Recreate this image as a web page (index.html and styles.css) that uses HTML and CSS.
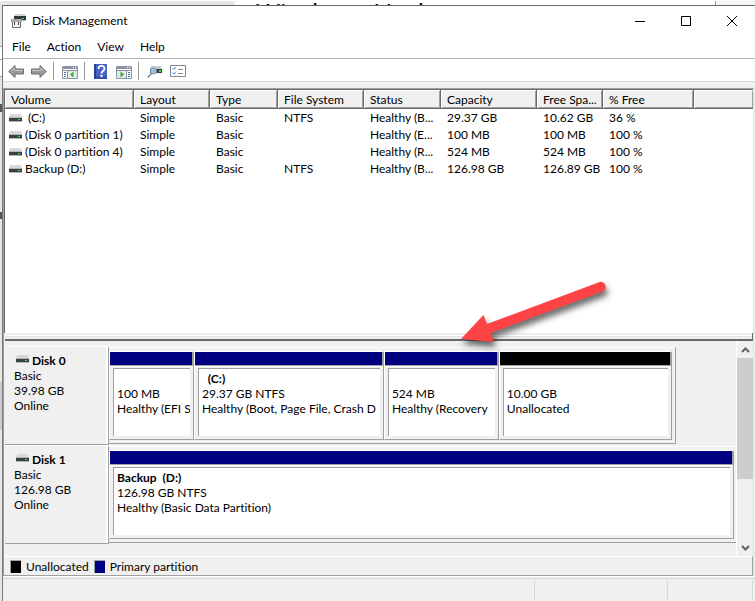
FILE: index.html
```html
<!DOCTYPE html>
<html lang="en">
<head>
<meta charset="utf-8">
<title>Disk Management</title>
<link rel="stylesheet" href="styles.css">
</head>
<body>
<svg class="defs" aria-hidden="true">
  <symbol id="drive" viewBox="0 0 13 8">
    <path d="M1 0h11l1 4H0z" fill="#d6d9dc"/>
    <rect y="3" width="13" height="5" fill="#b4b7ba"/>
    <rect y="4" width="13" height="3" fill="#3c4044"/>
    <rect x="9" y="5" width="2" height="1" fill="#2bf03c"/>
  </symbol>
</svg>
<div class="backdrop" aria-hidden="true"><span class="backdrop-title">Windows Update</span></div>
<main class="window">
  <header class="titlebar">
    <svg class="app-icon" viewBox="0 0 16 16" aria-hidden="true">
      <path d="M4 1h10l1 2H3z" fill="#d3d6da"/><rect x="3" y="3" width="12" height="4" fill="#34383c"/>
      <rect x="11" y="5" width="2" height="1" fill="#2bf03c"/><rect x="3" y="7" width="12" height="1" fill="#b4b7ba"/>
      <path d="M0 6h11v3H0z" fill="#a8a8a8"/><path d="M1 9h9v6H1z" fill="#707070"/><path d="M2 9h7v5H2z" fill="#f4f4f4"/>
      <path d="M3 9h1v3H3zM7 9h1v3H7z" fill="#444"/>
    </svg>
    <h1>Disk Management</h1>
    <div class="controls">
      <button aria-label="Minimize"><svg viewBox="0 0 10 10"><path d="M0 5.500h10"/></svg></button>
      <button aria-label="Maximize"><svg viewBox="0 0 10 10"><path d="M.5.5h9v9h-9z"/></svg></button>
      <button aria-label="Close"><svg viewBox="0 0 10 10"><path d="M0 0l10 10M10 0L0 10"/></svg></button>
    </div>
  </header>
  <nav class="menubar">
    <button>File</button><button>Action</button><button>View</button><button>Help</button>
  </nav>
  <div class="toolbar">
    <div class="group">
      <button aria-label="Back"><svg viewBox="0 0 16 16"><path d="M.7 7.500L7 1.500v3.500h8.500v5H7v3.500z" fill="#9a9a9a" stroke="#6c6c6c"/><path d="M3 7l3-3v2.500h9" fill="none" stroke="#c4c4c4"/></svg></button>
      <button aria-label="Forward"><svg viewBox="0 0 16 16"><path d="M15.300 7.500L9 1.500v3.500H.5v5H9v3.500z" fill="#9a9a9a" stroke="#6c6c6c"/><path d="M1 6.500h9V4l3 3" fill="none" stroke="#c4c4c4"/></svg></button>
    </div>
    <div class="group">
      <button aria-label="Show console tree"><svg viewBox="0 0 16 16"><path d="M.5 2.500h15v12H.5z" fill="#fff" stroke="#8a94a3"/><path d="M1 3h14v2H1z" fill="#8a94a3"/><path d="M11 3h1v1h-1zM13 3h1v1h-1z" fill="#fff"/><path d="M1 6.500h14M5.500 7v7" stroke="#8a94a3"/><path d="M2 8.500h2M2 10.500h2M2 12.500h2" stroke="#3f74b5"/><path d="M6 7h9v7H6z" fill="#e4e8ee"/><path d="M11.500 7.500v6L8 10.500z" fill="#35b11e"/></svg></button>
    </div>
    <div class="group">
      <button aria-label="Help"><svg viewBox="0 0 16 16"><path d="M1 0h13v15H1z" fill="#4565c8"/><path d="M1 0h2v15H1z" fill="#273f94"/><path d="M3 12h11v3H3z" fill="#3551ad"/><path d="M5.500 5c0-4 6-4 6-.5 0 2.500-3 2.500-3 5" fill="none" stroke="#fff" stroke-width="1.800"/><circle cx="8.500" cy="12" r="1.200" fill="#fff"/></svg></button>
      <button aria-label="Show action pane"><svg viewBox="0 0 16 16"><path d="M.5 2.500h15v12H.5z" fill="#fff" stroke="#8a94a3"/><path d="M1 3h14v2H1z" fill="#8a94a3"/><path d="M11 3h1v1h-1zM13 3h1v1h-1z" fill="#fff"/><path d="M1 6.500h14M10.500 7v7" stroke="#8a94a3"/><path d="M12 8.500h2M12 10.500h2M12 12.500h2" stroke="#3f74b5"/><path d="M1 7h9v7H1z" fill="#e4e8ee"/><path d="M4.500 7.500v6L8 10.500z" fill="#35b11e"/></svg></button>
    </div>
    <div class="group">
      <button aria-label="Rescan disks"><svg viewBox="0 0 16 16"><path d="M4 2h10l1 3H3z" fill="#c9ccd0"/><path d="M3 5h12v4H3z" fill="#34383c"/><path d="M12 6h2v2h-2z" fill="#2bf03c"/><circle cx="6.500" cy="7" r="3" fill="#9fc3dc" stroke="#7294ac"/><path d="M4.500 9.500L.8 13.500" stroke="#7d8790" stroke-width="1.600"/></svg></button>
      <button aria-label="Properties"><svg viewBox="0 0 16 16"><path d="M.5 1.500h15v11H.5z" fill="#fff" stroke="#858585"/><path d="M2.500 4l1.500 1.500L6 3M2.500 8.500L4 10l2-2.500" fill="none" stroke="#3a86d4"/><path d="M8 5.500h5M8 9.500h5" stroke="#8c8c8c"/></svg></button>
    </div>
  </div>
  <div class="client">
    <section class="volumes">
      <table>
        <colgroup><col class="c-volume"><col class="c-layout"><col class="c-type"><col class="c-fs"><col class="c-status"><col class="c-capacity"><col class="c-free"><col class="c-percent"><col></colgroup>
        <thead><tr><th>Volume</th><th>Layout</th><th>Type</th><th>File System</th><th>Status</th><th>Capacity</th><th>Free Spa...</th><th>% Free</th><th></th></tr></thead>
        <tbody>
          <tr><td><svg class="drive"><use href="#drive"/></svg>&nbsp;(C:)</td><td>Simple</td><td>Basic</td><td>NTFS</td><td>Healthy (B...</td><td>29.37 GB</td><td>10.62 GB</td><td>36 %</td><td></td></tr>
          <tr><td><svg class="drive"><use href="#drive"/></svg>(Disk 0 partition 1)</td><td>Simple</td><td>Basic</td><td></td><td>Healthy (E...</td><td>100 MB</td><td>100 MB</td><td>100 %</td><td></td></tr>
          <tr><td><svg class="drive"><use href="#drive"/></svg>(Disk 0 partition 4)</td><td>Simple</td><td>Basic</td><td></td><td>Healthy (R...</td><td>524 MB</td><td>524 MB</td><td>100 %</td><td></td></tr>
          <tr><td><svg class="drive"><use href="#drive"/></svg>Backup (D:)</td><td>Simple</td><td>Basic</td><td>NTFS</td><td>Healthy (B...</td><td>126.98 GB</td><td>126.89 GB</td><td>100 %</td><td></td></tr>
        </tbody>
      </table>
    </section>
    <div class="splitter"></div>
    <section class="graphical">
      <div class="disks">
        <article class="disk">
          <div class="disk-label"><h2><svg class="drive"><use href="#drive"/></svg>Disk 0</h2><p>Basic</p><p>39.98 GB</p><p>Online</p></div>
          <div class="track-area"><div class="track" style="width:90.4%">
            <div class="part" style="flex-grow:79"><div class="bar"></div><div class="box"><b>&nbsp;</b><p>100 MB</p><p>Healthy (EFI S</p></div></div>
            <div class="part" style="flex-grow:184"><div class="bar"></div><div class="box"><b>&nbsp; (C:)</b><p>29.37 GB NTFS</p><p>Healthy (Boot, Page File, Crash D</p></div></div>
            <div class="part" style="flex-grow:109"><div class="bar"></div><div class="box"><b>&nbsp;</b><p>524 MB</p><p>Healthy (Recovery</p></div></div>
            <div class="part" style="flex-grow:167"><div class="bar free"></div><div class="box"><b>&nbsp;</b><p>10.00 GB</p><p>Unallocated</p></div></div>
          </div></div>
        </article>
        <article class="disk">
          <div class="disk-label"><h2><svg class="drive"><use href="#drive"/></svg>Disk 1</h2><p>Basic</p><p>126.98 GB</p><p>Online</p></div>
          <div class="track-area"><div class="track full">
            <div class="part" style="flex-grow:1"><div class="bar"></div><div class="box"><b>Backup&nbsp; (D:)</b><p>126.98 GB NTFS</p><p>Healthy (Basic Data Partition)</p></div></div>
          </div></div>
        </article>
      </div>
      <div class="scrollbar">
        <button aria-label="Scroll up"><svg viewBox="0 0 9 6"><path d="M1 5l3.500-3.500L8 5"/></svg></button>
        <div class="thumb"></div>
        <button aria-label="Scroll down" class="down"><svg viewBox="0 0 9 6"><path d="M1 1l3.500 3.500L8 1"/></svg></button>
      </div>
    </section>
    <div class="legend"><span class="swatch free"></span><span>Unallocated</span><span class="swatch"></span><span>Primary partition</span></div>
  </div>
  <footer class="statusbar"><div class="s-main"></div><div class="s-mid"></div><div class="s-end"></div></footer>
</main>
<svg class="pointer" viewBox="0 0 160 80" aria-hidden="true">
  <path d="M7 69L29.500 45l3.500 9L145 12.200a5 5 0 0 1 3.500 9.400L36.500 63l3.500 9z" fill="#fd4343"/>
</svg>
</body>
</html>
```
FILE: styles.css
```css
* { box-sizing: border-box; }
html, body { height: 100%; }
body {
  margin: 0;
  position: relative;
  display: flex;
  flex-direction: column;
  overflow: hidden;
  background: linear-gradient(
    #e6e6e6 46px, #999 46px, #999 47px, #fff 47px, #fff 59px, #999 59px, #999 60px,
    #fff 60px, #fff 76px, #999 76px, #999 77px, #e6e6e6 77px, #e6e6e6 104px,
    #555 104px, #555 112px, #e6e6e6 112px, #e6e6e6 212px, #555 212px, #555 219px,
    #e6e6e6 219px, #e6e6e6 382px, #ccc 382px, #ccc 430px, #e6e6e6 430px);
  font: 12px/15px Lato, "Open Sans", sans-serif;
  font-variant-ligatures: none;
  color: #000;
}
h1, h2, p { margin: 0; font-size: inherit; font-weight: normal; }
button { border: 0; padding: 0; background: none; font: inherit; color: inherit; }
svg { display: block; }
.defs { position: absolute; width: 0; height: 0; }

.backdrop {
  flex: none;
  height: 5px;
  overflow: hidden;
  border-top: 1px solid #fff;
  background: linear-gradient(90deg, #e6e6e6 235px, #fff 235px, #fff 715px, #999 715px, #999 716px, #f5f5f5 716px);
}
.backdrop-title { display: block; margin-left: 256px; font: 26px/22px "Open Sans", sans-serif; }

.window {
  flex: 1;
  min-height: 0;
  margin-left: 2px;
  display: flex;
  flex-direction: column;
  border-top: 1px solid #666;
  border-left: 1px solid #777;
  background: #f0f0f0;
}
.titlebar { display: flex; align-items: center; height: 30px; padding: 0 0 1px 8px; background: #fff; }
.app-icon { width: 16px; height: 16px; margin-right: 5px; }
.controls { display: flex; margin-left: auto; }
.controls button { width: 46px; height: 29px; display: grid; place-items: center; }
.controls svg { width: 10px; height: 10px; fill: none; stroke: #000; }
.menubar { display: flex; height: 23px; padding: 0 1px 2px; background: #fff; border-bottom: 1px solid #b4b4b4; }
.menubar button { padding: 0 8px; }

.toolbar { display: flex; align-items: flex-end; height: 23px; padding: 0 0 1px; background: #fff; border-bottom: 1px solid #d9d9d9; }
.group { display: flex; align-items: flex-end; gap: 7px; height: 18px; padding: 0 6px 0 8px; border-right: 1px solid #999; }
.group:first-child { padding-left: 5px; }
.group:last-child { border-right: 0; }
.group svg { width: 16px; height: 16px; }

.client {
  flex: 1;
  min-height: 0;
  display: flex;
  flex-direction: column;
  margin: 6px 1px 2px 0;
  border: 1px solid #a0a0a0;
  border-right-color: #e3e3e3;
  box-shadow: 0 1px #fff;
}
.volumes { flex: 1; min-height: 0; background: #fff; border-top: 1px solid #696969; border-left: 1px solid #696969; overflow: hidden; }
table { width: 100%; table-layout: fixed; border-collapse: separate; border-spacing: 0; }
th, td { padding: 0 0 0 6px; text-align: left; font-weight: normal; white-space: nowrap; overflow: hidden; }
th {
  height: 19px;
  background: #f0f0f0;
  border-right: 1px solid #696969;
  border-bottom: 1px solid #696969;
  box-shadow: inset 1px 1px #fff, inset -1px -1px #a0a0a0;
}
th:last-child { border-right: 0; }
td { height: 17px; padding-bottom: 1px; }
td:first-child { padding-left: 4px; }
td .drive { display: inline-block; margin-right: 3px; }
.drive { width: 13px; height: 8px; }
.c-volume { width: 129px; }
.c-layout { width: 76px; }
.c-type { width: 68px; }
.c-fs { width: 86px; }
.c-status { width: 77px; }
.c-capacity { width: 96px; }
.c-free { width: 66px; }
.c-percent { width: 91px; }

.splitter {
  height: 8px;
  margin-left: 1px;
  border-bottom: 2px solid #696969;
  border-right: 1px solid #696969;
  background: linear-gradient(#eee 2px, #fff 2px, #fff 3px, #e3e3e3 3px, #e3e3e3 4px, #f0f0f0 4px);
}
.graphical { display: flex; height: 215px; }
.disks { flex: 1; min-width: 0; padding: 5px 0 0 1px; }
.disk { display: flex; height: 99px; }
.disk-label {
  flex: none;
  width: 104px;
  padding: 6px 0 0 9px;
  border-top: 1px solid #fff;
  border-bottom: 1px solid #a0a0a0;
  box-shadow: inset -1px 0 #a0a0a0, inset -3px 0 #fff;
}
.disk-label h2 { display: flex; align-items: center; gap: 3px; padding-left: 2px; font-weight: bold; }
.disk-label .drive { margin-bottom: 3px; }
.track-area { flex: 1; min-width: 0; padding: 1px 0; }
.track {
  display: flex;
  height: 97px;
  padding: 3px 3px 3px 0;
  border: 1px solid #a0a0a0;
  border-left: 0;
  border-top-color: #fff;
}
.track.full { border-right: 0; padding-right: 2px; }
.part {
  flex: 1 1 0;
  min-width: 0;
  display: flex;
  flex-direction: column;
  padding: 0 3px 3px 1px;
  border-top: 1px solid #fff;
  border-bottom: 1px solid #a0a0a0;
  border-right: 1px solid #a0a0a0;
  border-left: 1px solid #fff;
}
.bar {
  flex: none;
  height: 14px;
  margin: 0 -3px 2px -1px;
  background: #000080;
  border-right: 1px solid #a0a0a0;
  border-bottom: 1px solid #a0a0a0;
  box-shadow: 0 1px #fff;
}
.free { background: #000; }
.box {
  flex: 1;
  min-width: 0;
  margin-left: 2px;
  padding: 2px 0 0 3px;
  overflow: hidden;
  white-space: nowrap;
  background: #fff;
  border-top: 1px solid #a0a0a0;
  border-left: 1px solid #a0a0a0;
}
.box p { overflow: hidden; }
.box b { display: block; }

.scrollbar { flex: none; display: flex; flex-direction: column; width: 17px; border-left: 1px solid #fff; }
.scrollbar button { height: 17px; display: grid; place-items: center; }
.scrollbar svg { width: 9px; height: 6px; fill: none; stroke: #606060; stroke-width: 2; }
.scrollbar .down { margin-top: auto; }
.thumb { height: 121px; background: #cdcdcd; }

.legend { display: flex; align-items: center; gap: 5px; height: 19px; padding-left: 6px; border-top: 1px solid #fff; border-right: 1px solid #a0a0a0; }
.swatch { width: 11px; height: 13px; background: #000080; border-top: 1px solid #a0a0a0; border-left: 1px solid #a0a0a0; }
.swatch.free { background: #000; }

.statusbar { display: flex; height: 23px; padding: 1px 2px 1px 0; border-top: 1px solid #d7d7d7; }
.statusbar div { border-right: 1px solid #d7d7d7; }
.s-main { flex: 1; }
.s-mid { width: 133px; }
.s-end { width: 85px; }

.pointer { position: absolute; left: 454px; top: 270px; width: 160px; height: 80px; overflow: visible; filter: drop-shadow(2px 5px 3px rgba(0, 0, 0, .6)); }
```
